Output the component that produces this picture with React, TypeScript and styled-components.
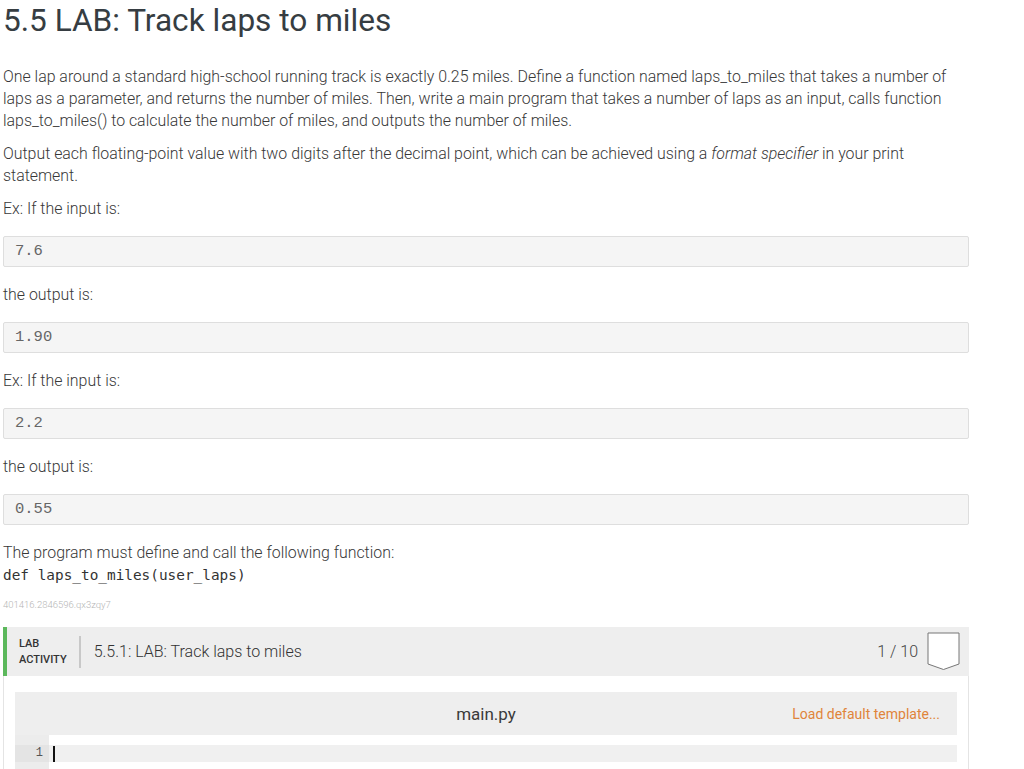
import styled, { createGlobalStyle } from "styled-components";

const GlobalStyle = createGlobalStyle`
    body {
        margin: 0;
        background: #fff;
        font-family: Roboto, "Liberation Sans", sans-serif;
        color: #333;
    }
`;

const Page = styled.div`
    width: 966px;
    padding: 0 0 0 3px;
`;

const Title = styled.h1`
    font-size: 31.6px;
    font-weight: 400;
    line-height: 40px;
    margin: 1px 0 0 0;
    color: #363d42;
`;

const Paragraph = styled.p`
    font-size: 15.9px;
    font-weight: 300;
    line-height: 22px;
    margin: 0 0 11px 0;
    color: #383838;
    padding-right: 16px;
`;

const Lead = styled(Paragraph)`
    margin-top: 25px;
`;

const CodeBox = styled.pre`
    margin: 15.5px 0 17.5px 0;
    height: 31px;
    box-sizing: border-box;
    padding: 0 11px;
    display: flex;
    align-items: center;
    background: #f5f5f5;
    border: 1px solid #dedede;
    border-radius: 2px;
    font-family: "Liberation Mono", monospace;
    font-size: 15.5px;
    color: #666;
`;

const Signature = styled.code`
    display: block;
    font-family: "DejaVu Sans Mono", monospace;
    font-size: 14.4px;
    line-height: 22px;
    color: #333;
    margin-top: -11px;
`;

const Stamp = styled.div`
    font-size: 9.5px;
    font-weight: 300;
    color: #b5b5b5;
    margin-top: 13px;
    height: 12px;
`;

const Activity = styled.div`
    margin-top: 16px;
    width: 966px;
`;

const ActivityHeader = styled.div`
    display: flex;
    align-items: center;
    height: 49px;
    background: #eeeeee;
    border-left: 4px solid #5cb85c;
    padding-left: 12px;
    padding-right: 9px;
`;

const Tag = styled.div`
    font-size: 11px;
    font-weight: 500;
    line-height: 16px;
    color: #333;
    padding-right: 12px;
    border-right: 2px solid #c8c8c8;
    margin-right: 13px;
`;

const ActivityTitle = styled.div`
    flex: 1;
    font-size: 16px;
    font-weight: 300;
    color: #333;
`;

const Score = styled.div`
    font-size: 16px;
    font-weight: 300;
    color: #444;
    margin-right: 9px;
`;

const ActivityBody = styled.div`
    border-left: 1px solid #e4e4e4;
    border-right: 1px solid #e4e4e4;
    padding: 16px 11px 0 11px;
`;

const Editor = styled.div`
    background: #fff;
`;

const EditorBar = styled.div`
    display: grid;
    grid-template-columns: 1fr auto 1fr;
    align-items: center;
    height: 43px;
    background: #eeeeee;
    padding: 0 17px;
`;

const FileName = styled.div`
    font-size: 17px;
    font-weight: 400;
    color: #3a3a3a;
`;

const TemplateLink = styled.div`
    justify-self: end;
    font-size: 14px;
    font-weight: 400;
    color: #e0843a;
`;

const CodeArea = styled.div`
    display: grid;
    grid-template-columns: 34px 1fr;
    min-height: 200px;
`;

const Gutter = styled.div`
    background: #ececec;
    padding-top: 10px;
`;

const Lines = styled.div`
    padding-top: 10px;
`;

const GutterLine = styled.div`
    height: 17px;
    background: #e4e4e4;
    font-family: "Liberation Mono", monospace;
    font-size: 12px;
    line-height: 17px;
    color: #555;
    text-align: right;
    padding-right: 6px;
`;

const CodeLine = styled.div`
    height: 17px;
    background: #f0f0f0;
    padding-left: 4px;
    display: flex;
    align-items: center;
`;

const Caret = styled.span`
    width: 2px;
    height: 16px;
    background: #111;
`;

function Bookmark() {
    return (
        <svg width="33" height="39" viewBox="0 0 33 39">
            <path d="M1 1 H32 V32 L16.5 37.5 L1 32 Z" fill="#fff" stroke="#777" strokeWidth="1" />
        </svg>
    );
}

function App() {
    return (
        <>
            <GlobalStyle />
            <Page>
                <Title>5.5 LAB: Track laps to miles</Title>
                <Lead>
                    One lap around a standard high-school running track is exactly 0.25 miles. Define a function named laps_to_miles that takes a number of laps as a parameter, and returns the number of miles. Then, write a main program that takes a number of laps as an input, calls function laps_to_miles() to calculate the number of miles, and outputs the number of miles.
                </Lead>
                <Paragraph>
                    Output each floating-point value with two digits after the decimal point, which can be achieved using a <em>format specifier</em> in your print statement.
                </Paragraph>
                <Paragraph>Ex: If the input is:</Paragraph>
                <CodeBox>7.6</CodeBox>
                <Paragraph>the output is:</Paragraph>
                <CodeBox>1.90</CodeBox>
                <Paragraph>Ex: If the input is:</Paragraph>
                <CodeBox>2.2</CodeBox>
                <Paragraph>the output is:</Paragraph>
                <CodeBox>0.55</CodeBox>
                <Paragraph>The program must define and call the following function:</Paragraph>
                <Signature>def laps_to_miles(user_laps)</Signature>
                <Stamp>401416.2846596.qx3zqy7</Stamp>
                <Activity>
                    <ActivityHeader>
                        <Tag>
                            LAB
                            <br />
                            ACTIVITY
                        </Tag>
                        <ActivityTitle>5.5.1: LAB: Track laps to miles</ActivityTitle>
                        <Score>1 / 10</Score>
                        <Bookmark />
                    </ActivityHeader>
                    <ActivityBody>
                        <Editor>
                            <EditorBar>
                                <span />
                                <FileName>main.py</FileName>
                                <TemplateLink>Load default template...</TemplateLink>
                            </EditorBar>
                            <CodeArea>
                                <Gutter>
                                    <GutterLine>1</GutterLine>
                                </Gutter>
                                <Lines>
                                    <CodeLine>
                                        <Caret />
                                    </CodeLine>
                                </Lines>
                            </CodeArea>
                        </Editor>
                    </ActivityBody>
                </Activity>
            </Page>
        </>
    );
}

export default App;
